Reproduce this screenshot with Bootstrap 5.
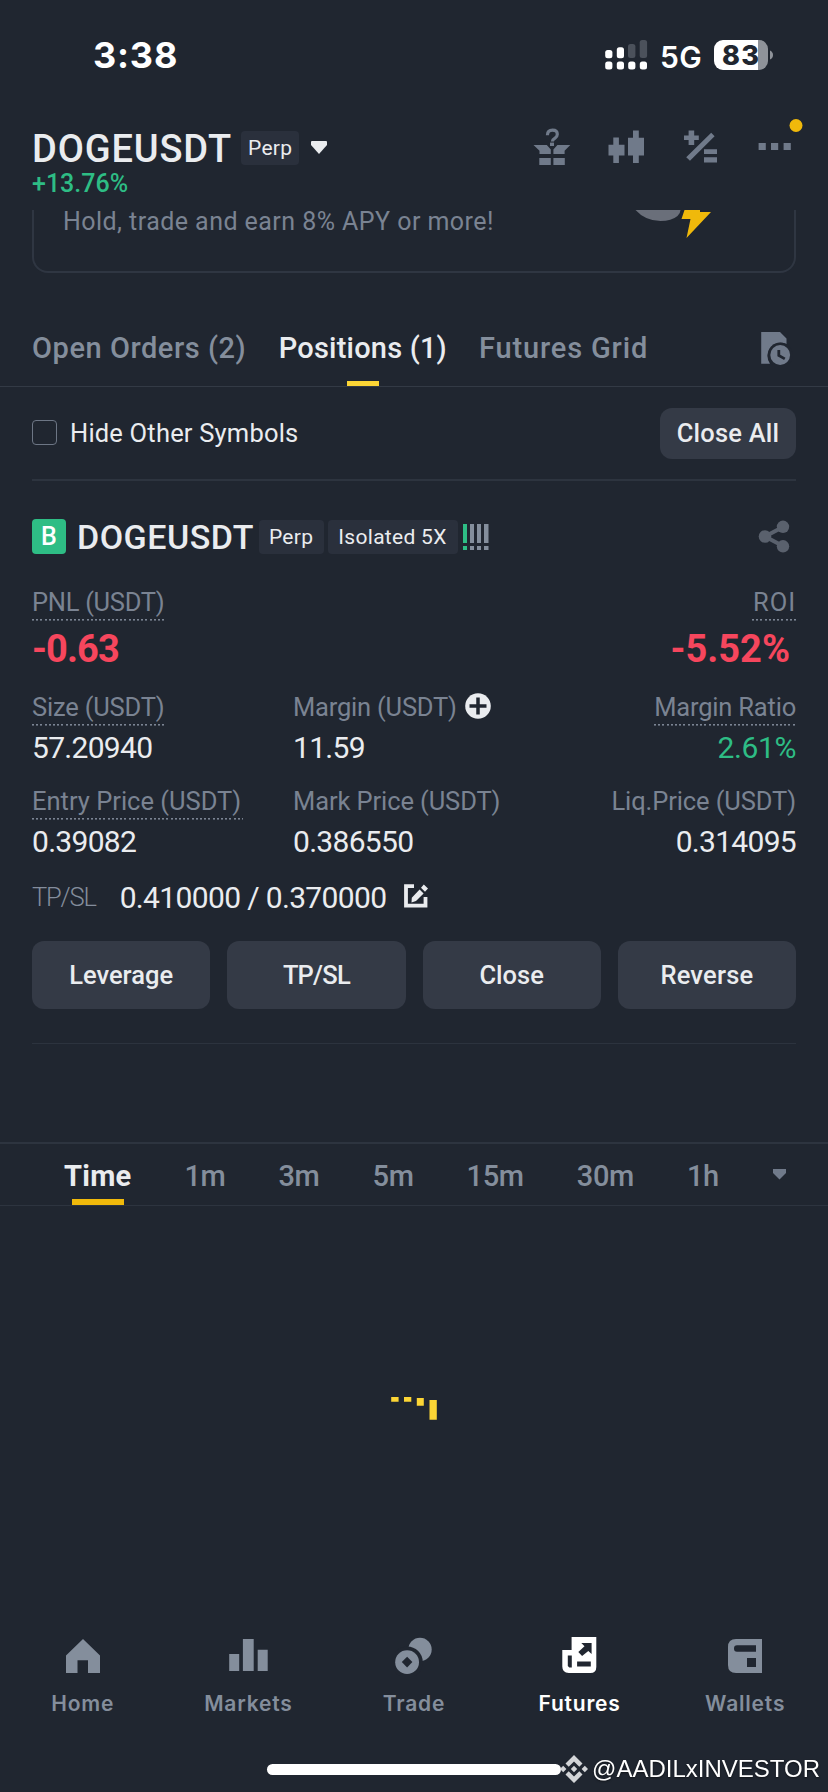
<!DOCTYPE html>
<html lang="en" data-bs-theme="dark">
<head>
<meta charset="utf-8">
<meta name="viewport" content="width=device-width, initial-scale=1">
<title>DOGEUSDT Perp</title>
<link href="https://cdn.jsdelivr.net/npm/bootstrap@5.3.0/dist/css/bootstrap.min.css" rel="stylesheet">
<style>
  :root { --bg:#202630; --fg:#eaecef; --dim:#848e9c; --dim2:#7a8392; --line:#2d343f; --btn:#343a46; --gold:#f0b90b; --up:#2ebd85; --down:#f6465d; }
  body { background:var(--bg); color:var(--fg); font-family:Roboto,sans-serif; width:828px; height:1792px; overflow:hidden; }
  body * { white-space:nowrap; }
  svg { display:block; flex:none; }
  .ios { font-family:Inter,sans-serif; color:#fff; }
  .statusbar { height:110px; padding:0 55px 0 93px; }
  .clock { font-size:36px; font-weight:700; letter-spacing:.8px; line-height:110px; }
  .net { font-size:30px; font-weight:600; letter-spacing:.3px; line-height:36px; margin:3px 12px 0 12.5px; }
  .battery { width:54px; height:30px; border-radius:9px; background:linear-gradient(90deg,#fff 44.5px,#8f939a 44.5px); color:var(--bg); font-size:27px; font-weight:800; line-height:31px; letter-spacing:1.2px; padding-left:8px; }
  .pairbar { height:100px; padding:15px 32px 0; }
  .pairname { font-size:38px; font-weight:500; letter-spacing:.84px; line-height:47px; padding-top:1px; height:47px; }
  .tag { background:#2a303c; border-radius:4px; font-size:21px; letter-spacing:.3px; height:34px; line-height:35px; }
  .change { color:var(--up); font-size:25px; font-weight:500; line-height:24px; }
  .promo { height:63px; margin:0 32px; border:2px solid #2f3642; border-top:0; border-radius:0 0 16px 16px; padding-left:29px; color:var(--dim2); font-size:25px; letter-spacing:.45px; line-height:23px; }
  .maintabs { margin-top:37px; height:77px; border-bottom:1px solid #333a45; padding:0 32px; font-size:29px; font-weight:500; line-height:76px; color:var(--dim); }
  .on { color:var(--fg); position:relative; }
  .on::after { content:""; position:absolute; left:50%; transform:translateX(-50%); background:#fcd535; }
  .maintabs .on::after { width:32px; height:5px; bottom:0; }
  .filter { height:94px; margin:0 32px; border-bottom:2px solid var(--line); font-size:25.5px; letter-spacing:.2px; }
  .box { width:25px; height:25px; border:1.5px solid #6d7685; border-radius:4px; margin-right:13px; margin-bottom:1px; }
  .act { background:var(--btn); color:var(--fg); border:0; border-radius:12px; font-size:25.5px; font-weight:500; padding:0; }
  .closeall { width:136px; height:51px; line-height:50px; letter-spacing:.2px; }
  .poshead { height:36px; margin-top:38px; }
  .side { width:34px; height:35px; border-radius:4px; background:var(--up); color:#fff; font-size:25px; font-weight:500; line-height:35px; text-align:center; margin-bottom:1px; }
  .posname { font-size:34px; font-weight:500; letter-spacing:.5px; line-height:37px; }
  .lab { display:inline-block; color:var(--dim2); font-size:25.5px; letter-spacing:-.2px; line-height:34px; height:36px; vertical-align:top; }
  .dots { background:repeating-linear-gradient(90deg,#7b8493 0 2px,transparent 2px 4.2px) left bottom/100% 1.6px no-repeat; }
  .val { font-size:30px; letter-spacing:-.7px; line-height:44px; }
  .big { font-size:38px; font-weight:700; color:var(--down); line-height:56px; height:55px; }
  .c1 { width:261px; } .c2 { width:260px; }
  .acts { margin-top:26px; gap:17px; }
  .acts .act { height:68px; line-height:67px; flex:1 1 0; }
  .rule { height:1px; background:#2c333e; margin:34px 32px 98px; }
  .times { height:64px; border-top:2px solid var(--line); border-bottom:1px solid var(--line); padding:1px 42px 0 64px; font-size:29px; font-weight:500; letter-spacing:-.35px; line-height:62px; color:var(--dim); gap:53px; }
  .times .on { font-weight:700; letter-spacing:.25px; }
  .times .on::after { width:52px; height:6px; bottom:0; background:var(--gold); }
  .chart { height:416px; }
  .tabbar { padding-top:12px; font-family:Inter,sans-serif; font-size:21px; font-weight:600; letter-spacing:.8px; color:var(--dim); }
  .tabbar > div { flex:1 1 0; }
  .tabbar span { line-height:28px; margin-top:14px; }
  .grip { width:294px; height:11px; border-radius:6px; background:#fff; margin:46px auto 0; }
  .credit { right:8px; bottom:7px; font:24px/32px "Liberation Sans",sans-serif; color:#fff; text-shadow:0 1px 2px rgba(0,0,0,.5); }
</style>
</head>
<body>

<header class="statusbar ios d-flex align-items-center justify-content-between">
  <div class="clock">3:38</div>
  <div class="d-flex align-items-center">
    <svg width="43" height="30" viewBox="605 40 43 30" fill="#fff"><g fill="#4b515b"><rect x="628" y="44" width="7.4" height="14" rx="2.5"/><rect x="639.7" y="40" width="7.4" height="18" rx="2.5"/></g><rect x="605.2" y="50" width="7.2" height="8.2" rx="2.5"/><rect x="616.8" y="47.3" width="7.2" height="11" rx="2.5"/><rect x="605.2" y="61.6" width="7.2" height="8" rx="2.5"/><rect x="616.8" y="61.6" width="7.2" height="8" rx="2.5"/><rect x="628.2" y="61.6" width="7.2" height="8" rx="2.5"/><rect x="639.8" y="61.6" width="7.2" height="8" rx="2.5"/></svg>
    <div class="net">5G</div>
    <div class="battery">83</div>
    <svg width="5" height="12" viewBox="0 0 5 12"><path d="M2 1.5Q5 3 5 6T2 10.5z" fill="#8f939a"/></svg>
  </div>
</header>

<section class="pairbar position-relative">
  <div class="d-flex align-items-center justify-content-between">
    <div class="d-flex align-items-center">
      <div class="pairname">DOGEUSDT</div>
      <div class="tag" style="margin-left:9px;padding:0 7px;margin-bottom:2px">Perp</div>
      <svg width="16" height="13" viewBox="0 0 16 13" style="margin-left:12px;margin-bottom:3px"><path d="M1 0h14q1 0 1 1v3L8 13 0 4V1q0-1 1-1z" fill="#eaecef"/></svg>
    </div>
    <svg width="263" height="47" viewBox="533 125 263 47" fill="#707a8a">
      <path d="M547.400 135.200Q547.500 130.200 552.500 130.200q4.800 0 4.800 4 0 2.400-2.300 3.900-2.600 1.600-2.600 3.300" fill="none" stroke="#707a8a" stroke-width="3.200"/>
      <rect x="550" y="142.600" width="4" height="3.400"/>
      <path d="M533.500 145h13.300l4 4.400v4.600h-11.300v-3.200zM570.300 145H557.400l-4 4.400v4.600h11.200v-3.200zM539.300 158h11.500v7h-11.500zM553.400 158h11.400v7h-11.400z"/>
      <path d="M613.300 137.600h5.600v7.200h5.600v10.800h-5.600v7.400h-5.600v-7.400h-4.800v-10.800h4.800zM633 130.500h5.800v7.200h5.200v17.900h-5.200v7.400H633v-7.400h-5v-17.900h5z"/>
      <path d="M688.600 130.600h5.600v4.800h4.600v4.700h-4.600v5h-5.600v-5H684v-4.700h4.600zM711.200 132.800l3.400 3.400-24.600 24.600-3.800-3.600zM704 149.200h13v4.800h-13zM704 157.300h13v5.300h-13zM758.600 143h7.200v7h-7.200zM771 143h7.200v7H771zM783.600 143h7.200v7h-7.200z"/>
    </svg>
  </div>
  <div class="change">+13.76%</div>
  <svg class="position-absolute" style="right:25px;top:8px" width="14" height="14"><circle cx="7" cy="7.500" r="6.500" fill="#f0b90b"/></svg>
</section>

<section class="promo d-flex align-items-start justify-content-between">
  <div>Hold, trade and earn 8% APY or more!</div>
  <svg width="76" height="30" viewBox="635 210 76 30" style="margin-right:83px"><path d="M635.5 210H680.500q0 3-3 6-6 5-17 5-15 0-25-11z" fill="#6a6f7a"/><path d="M684.500 210H700v2h11L686.500 238l4-19h-9z" fill="#f0b90b"/></svg>
</section>

<nav class="maintabs d-flex align-items-center">
  <div style="letter-spacing:.55px">Open Orders (2)</div>
  <div class="on" style="letter-spacing:.2px;margin-left:32.500px">Positions (1)</div>
  <div style="letter-spacing:.85px;margin-left:32px">Futures Grid</div>
  <svg class="ms-auto" width="36" height="34" viewBox="760 330 36 34"><path d="M761.200 331H780l6.500 6.500v5.500A13.300 13.300 0 0 0 770 362.800H761.200z" fill="#707a8a"/><circle cx="780.2" cy="354" r="12.500" fill="#202630"/><circle cx="780.2" cy="354" r="9.900" fill="#707a8a"/><path d="M778.800 349v5.500l6 3.400" fill="none" stroke="#202630" stroke-width="2.800"/></svg>
</nav>

<div class="filter d-flex align-items-center">
  <div class="box"></div>
  <div>Hide Other Symbols</div>
  <button class="act closeall ms-auto">Close All</button>
</div>

<main style="margin:0 32px">
  <div class="poshead d-flex align-items-center">
    <div class="side">B</div>
    <div class="posname" style="margin-left:11px">DOGEUSDT</div>
    <div class="tag" style="margin-left:5px;padding:0 11px 0 10px">Perp</div>
    <div class="tag" style="margin-left:4px;padding:0 11px 0 10px">Isolated 5X</div>
    <svg style="margin-left:5px" width="26" height="27" viewBox="463 524 26 27" fill="#848e9c"><path d="M463 524h4v19h-4zM463 546h4v4h-4z" fill="#2ebd85"/><path d="M470 524h4v19h-4zM477 524h4v19h-4zM484 524h4.500v19H484zM470 546h4v4h-4zM477 546h4v4h-4zM484 546h4.500v4H484z"/></svg>
    <svg class="ms-auto" style="margin-right:6px" width="32" height="34" viewBox="758 520 32 34" fill="#5a616d"><path d="M783 527l-18 9.500 18 9.500" fill="none" stroke="#5a616d" stroke-width="4"/><circle cx="765" cy="536.500" r="6.300"/><circle cx="783" cy="526.800" r="6.200"/><circle cx="783" cy="546.300" r="6.200"/></svg>
  </div>

  <div class="d-flex justify-content-between" style="margin-top:30px">
    <div><span class="lab dots" style="padding-right:1px;letter-spacing:-.3px">PNL (USDT)</span><div class="big" style="letter-spacing:-.9px">-0.63</div></div>
    <div class="text-end"><span class="lab dots" style="letter-spacing:.9px;padding-left:1px">ROI</span><div class="big" style="padding-right:6px">-5.52%</div></div>
  </div>

  <div class="d-flex" style="margin-top:14px">
    <div class="c1"><span class="lab dots" style="padding-right:2px">Size (USDT)</span><div class="val">57.20940</div></div>
    <div class="c2"><div class="d-flex"><span class="lab">Margin (USDT)</span><svg style="margin:3px 0 0 8px" width="26" height="26" viewBox="0 0 26 26"><circle cx="13" cy="13" r="12.800" fill="#eaecef"/><path d="M13 4.500v17M4.500 13h17" stroke="#202630" stroke-width="3.500"/></svg></div><div class="val">11.59</div></div>
    <div class="flex-fill text-end"><span class="lab dots">Margin Ratio</span><div class="val" style="color:var(--up);letter-spacing:-.4px">2.61%</div></div>
  </div>

  <div class="d-flex" style="margin-top:14px">
    <div class="c1"><span class="lab dots" style="padding-right:2px;letter-spacing:0">Entry Price (USDT)</span><div class="val">0.39082</div></div>
    <div class="c2"><span class="lab" style="letter-spacing:-.1px">Mark Price (USDT)</span><div class="val">0.386550</div></div>
    <div class="flex-fill text-end"><span class="lab" style="letter-spacing:-.1px">Liq.Price (USDT)</span><div class="val">0.314095</div></div>
  </div>

  <div class="d-flex align-items-center" style="margin-top:16px;height:35px">
    <span class="lab" style="letter-spacing:-1.2px;font-weight:300;font-size:25.500px;color:#848d9c">TP/SL</span>
    <span class="val" style="letter-spacing:-.65px;margin-left:24px">0.410000 / 0.370000</span>
    <svg style="margin-left:18px;margin-top:-3px" width="24" height="24" viewBox="403 884 24 24"><path d="M413 886.200h-8v19.500h19.500V897" fill="none" stroke="#eaecef" stroke-width="3.800"/><path d="M410.500 902.500l.3-4.800 7.800-8.300 4 4-7.600 7.600zM420 887.800l2.800-3.300 4.200 4-3 3.300z" fill="#eaecef"/></svg>
  </div>

  <div class="acts d-flex">
    <button class="act">Leverage</button>
    <button class="act" style="letter-spacing:-.8px">TP/SL</button>
    <button class="act">Close</button>
    <button class="act" style="letter-spacing:.2px">Reverse</button>
  </div>
</main>

<div class="rule"></div>

<nav class="times d-flex">
  <div class="on">Time</div><div>1m</div><div>3m</div><div>5m</div><div>15m</div><div>30m</div><div>1h</div>
  <svg class="ms-auto" style="margin-top:24px" width="13" height="11" viewBox="0 0 13 11"><path d="M0 0h13v4L6.500 10.500 0 4z" fill="#707a8a"/></svg>
</nav>

<section class="chart d-flex align-items-center justify-content-center">
  <svg width="46" height="40" viewBox="391 1394 46 40" fill="#fcd535"><path d="M391.200 1397h7.400v4.700h-7.400zM404 1397h7.300v4.700H404zM416.800 1398h7v7.800h-7zM429.500 1400h7.300v19.800h-7.300z"/></svg>
</section>

<nav class="tabbar d-flex text-center">
  <div class="d-flex flex-column align-items-center">
    <svg width="34" height="42" viewBox="66 1634 34 42" fill="currentColor"><path d="M83 1639l17 16.500V1673H88v-12.800H77.500V1673H66v-17.500z"/></svg><span>Home</span></div>
  <div class="d-flex flex-column align-items-center">
    <svg width="39" height="42" viewBox="228.300 1634 39 42" fill="currentColor"><path d="M228.500 1654H238.500v17H228.500zM242.200 1639H253v32H242.200zM257 1649.700h10V1671h-10z"/></svg><span>Markets</span></div>
  <div class="d-flex flex-column align-items-center">
    <svg width="37" height="42" viewBox="395.500 1634 37 42"><circle cx="420.500" cy="1649.500" r="11.700" fill="currentColor"/><circle cx="407.600" cy="1662.200" r="15.700" fill="#202630"/><circle cx="407.600" cy="1662.200" r="11.900" fill="currentColor"/><path d="M407.600 1656.700l5.300 5.400-5.300 5.400-5.300-5.400z" fill="#202630"/></svg><span>Trade</span></div>
  <div class="d-flex flex-column align-items-center text-white">
    <svg width="35" height="42" viewBox="561.700 1634 35 42"><path d="M571.300 1637H596v30q0 6-6 6h-21.500q-6.500 0-6.500-6.500V1650h9.300z" fill="#fff"/><path d="M567.500 1655.500h4v12h-2.500l-1.500-1.500zM576.800 1661.500h13.700v5h-13.700zM581 1643h10.300v11l-3.300-3.100-6.200 5.100-3.800-4 6.200-5.800z" fill="#202630"/></svg><span>Futures</span></div>
  <div class="d-flex flex-column align-items-center">
    <svg width="34" height="42" viewBox="728 1634 34 42"><path d="M728 1647q0-8 8-8h26v34h-26q-8 0-8-8z" fill="currentColor"/><path d="M737 1645.200h19v6.500h-19q-3 0-3-3.250t3-3.250zM747 1658h9v9h-9z" fill="#202630"/></svg><span>Wallets</span></div>
</nav>
<div class="grip"></div>

<div class="credit position-fixed d-flex align-items-center">
  <svg width="28" height="28" viewBox="0 0 28 28" fill="#d3d5d8" style="margin-right:4px"><path d="M14 0l8.500 8.500-3.200 3.200L14 6.400l-5.300 5.300-3.200-3.200zM14 28l8.500-8.500-3.200-3.200L14 21.600l-5.300-5.300-3.200 3.200zM3.200 10.800L6.400 14l-3.200 3.200L0 14zM24.800 10.800L28 14l-3.200 3.200-3.200-3.200zM14 10.800l3.200 3.200-3.200 3.200-3.200-3.200z"/></svg>@AADILxINVESTOR
</div>

<script src="https://cdn.jsdelivr.net/npm/bootstrap@5.3.0/dist/js/bootstrap.bundle.min.js"></script>
</body>
</html>
